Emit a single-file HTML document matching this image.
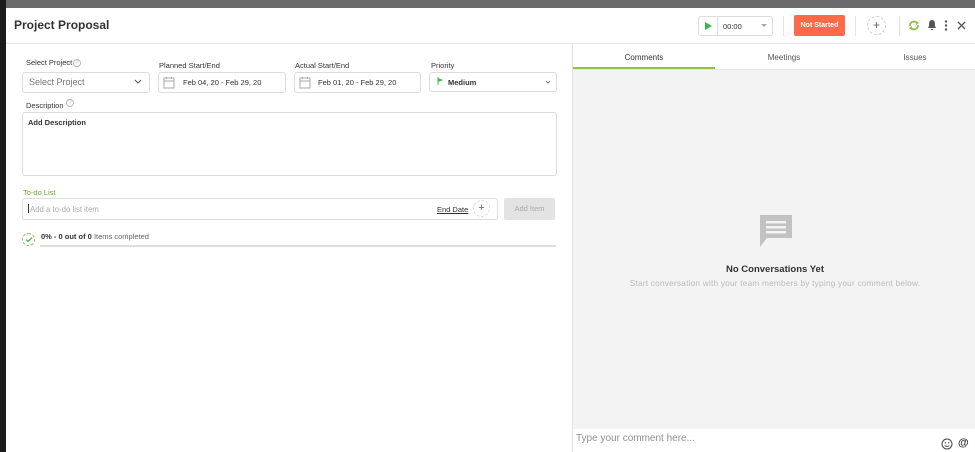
<!DOCTYPE html>
<html><head><style>
*{box-sizing:border-box;margin:0;padding:0}
body{width:975px;height:452px;overflow:hidden;background:#555;font-family:"Liberation Sans",sans-serif;position:relative;color:#333}
.abs{position:absolute}
.top{left:0;top:0;width:975px;height:8px;background:#6b6b6b}
.lft{left:0;top:0;width:6px;height:452px;background:#1c1c1c}
.modal{left:6px;top:8px;width:969px;height:444px;background:#fff}
.hdr{left:6px;top:8px;width:969px;height:36px;border-bottom:1px solid #e8e8e8;background:#fff}
.lbl{font-size:7.5px;color:#333}
.box{border:1px solid #ddd;border-radius:3px;background:#fff;font-size:8px}
</style></head><body>
<div class="abs top"></div><div class="abs lft"></div>
<div class="abs modal"></div>
<div class="abs hdr"></div>
<div class="abs" style="left:14px;top:18px;font-size:12px;color:#333;font-weight:bold">Project Proposal</div>
<div class="abs box" style="left:698px;top:16px;width:75px;height:20px"></div>
<div class="abs" style="left:717px;top:16px;width:1px;height:20px;background:#ddd"></div>
<svg class="abs" style="left:704px;top:21px" width="9" height="10"><path d="M1 1L8 5L1 9Z" fill="#3cb54a"/></svg>
<div class="abs" style="left:723px;top:22px;font-size:7.5px">00:00</div>
<svg class="abs" style="left:761px;top:24px" width="6" height="4"><path d="M0 0L6 0L3 3Z" fill="#aaa"/></svg>
<div class="abs" style="left:783px;top:16px;width:1px;height:20px;background:#e5e5e5"></div>
<div class="abs" style="left:794px;top:15px;width:51px;height:21px;background:#fe6a48;border-radius:2px;color:#fff;font-size:7px;font-weight:bold;text-align:center;line-height:21px">Not Started</div>
<div class="abs" style="left:855px;top:16px;width:1px;height:20px;background:#e5e5e5"></div>
<div class="abs" style="left:867px;top:16px;width:19px;height:19px;border:1px dashed #ccc;border-radius:50%;text-align:center;line-height:17px;font-size:12px;color:#666">+</div>
<div class="abs" style="left:899px;top:16px;width:1px;height:20px;background:#e5e5e5"></div>
<svg class="abs" style="left:908px;top:20px" width="12" height="11"><path d="M2 6A4 4 0 0 1 9 3M10 5A4 4 0 0 1 3 8" stroke="#8bc34a" stroke-width="1.8" fill="none"/><path d="M8 1L11 3L8 5Z M4 6L1 8L4 10Z" fill="#8bc34a"/></svg>
<svg class="abs" style="left:927px;top:19px" width="10" height="12"><path d="M5 1C2 1 2 4 2 7L1 9H9L8 7C8 4 8 1 5 1Z M4 10H6V11H4Z" fill="#555"/></svg>
<svg class="abs" style="left:944px;top:20px" width="4" height="11"><circle cx="2" cy="1.5" r="1.2" fill="#555"/><circle cx="2" cy="5.5" r="1.2" fill="#555"/><circle cx="2" cy="9.5" r="1.2" fill="#555"/></svg>
<svg class="abs" style="left:957px;top:21px" width="9" height="9"><path d="M1 1L8 8M8 1L1 8" stroke="#555" stroke-width="1.3"/></svg>
<div class="abs" style="left:572px;top:44px;width:1px;height:408px;background:#e3e3e3"></div>
<div class="abs" style="left:573px;top:44px;width:402px;height:385px;background:#f3f3f3"></div>
<div class="abs" style="left:573px;top:44px;width:402px;height:26px;background:#fff;border-bottom:1px solid #e5e5e5"></div>
<div class="abs" style="left:573px;top:67px;width:142px;height:2px;background:#8bc34a"></div>
<div class="abs" style="left:573px;top:53px;width:142px;text-align:center;font-size:8px;color:#333">Comments</div>
<div class="abs" style="left:715px;top:53px;width:138px;text-align:center;font-size:8px;color:#555">Meetings</div>
<div class="abs" style="left:855px;top:53px;width:120px;text-align:center;font-size:8px;color:#555">Issues</div>
<svg class="abs" style="left:759px;top:214px" width="34" height="34"><path d="M1 1H33V24H8L1 33Z" fill="#c2c2c2"/><rect x="7" y="7" width="20" height="2.5" fill="#f3f3f3"/><rect x="7" y="12" width="20" height="2.5" fill="#f3f3f3"/><rect x="7" y="17" width="20" height="2.5" fill="#f3f3f3"/></svg>
<div class="abs" style="left:573px;top:264px;width:404px;text-align:center;font-size:9.5px;font-weight:bold;color:#333">No Conversations Yet</div>
<div class="abs" style="left:573px;top:278px;width:404px;text-align:center;font-size:8.3px;color:#bbb;letter-spacing:.2px">Start conversation with your team members by typing your comment below.</div>
<div class="abs" style="left:576px;top:433px;font-size:10px;color:#8a8f99">Type your comment here...</div>
<svg class="abs" style="left:941px;top:438px" width="12" height="12"><circle cx="6" cy="6" r="5" stroke="#444" fill="none"/><circle cx="4.3" cy="4.8" r=".7" fill="#444"/><circle cx="7.7" cy="4.8" r=".7" fill="#444"/><path d="M3.8 7.5Q6 9.3 8.2 7.5" stroke="#444" fill="none"/></svg>
<div class="abs" style="left:958px;top:437px;font-size:11px;color:#333;font-weight:bold">@</div>
<div class="abs lbl" style="left:26px;top:58px">Select Project</div>
<div class="abs" style="left:73px;top:59px;width:8px;height:8px;border:1px solid #bbb;border-radius:50%;font-size:6px;color:#bbb;text-align:center;line-height:6px">?</div>
<div class="abs lbl" style="left:159px;top:61px">Planned Start/End</div>
<div class="abs lbl" style="left:295px;top:61px">Actual Start/End</div>
<div class="abs lbl" style="left:431px;top:61px">Priority</div>
<div class="abs box" style="left:22px;top:72px;width:128px;height:21px"></div>
<div class="abs" style="left:29px;top:77px;font-size:9px;color:#777">Select Project</div>
<svg class="abs" style="left:134px;top:79px" width="8" height="5"><path d="M1 1L4 4L7 1" stroke="#555" fill="none"/></svg>
<div class="abs box" style="left:158px;top:72px;width:128px;height:21px"></div>
<div class="abs box" style="left:294px;top:72px;width:127px;height:21px"></div>
<svg class="abs" style="left:163px;top:76px" width="12" height="13"><rect x="1" y="2" width="10" height="10" stroke="#aaa" fill="none"/><path d="M1 5H11M3.5 1V3M8.5 1V3" stroke="#aaa"/></svg>
<svg class="abs" style="left:299px;top:76px" width="12" height="13"><rect x="1" y="2" width="10" height="10" stroke="#aaa" fill="none"/><path d="M1 5H11M3.5 1V3M8.5 1V3" stroke="#aaa"/></svg>
<div class="abs" style="left:183px;top:78px;font-size:7.5px">Feb 04, 20 - Feb 29, 20</div>
<div class="abs" style="left:318px;top:78px;font-size:7.5px">Feb 01, 20 - Feb 29, 20</div>
<div class="abs box" style="left:429px;top:72px;width:128px;height:20px"></div>
<svg class="abs" style="left:437px;top:77px" width="7" height="8"><path d="M1 0V8" stroke="#3cb54a"/><path d="M1 1L6 3L1 5Z" fill="#3cb54a"/></svg>
<div class="abs" style="left:448px;top:78px;font-size:7.5px;font-weight:bold">Medium</div>
<svg class="abs" style="left:545px;top:80px" width="6" height="4"><path d="M1 1L3 3L5 1" stroke="#777" fill="none"/></svg>
<div class="abs lbl" style="left:26px;top:101px">Description</div>
<div class="abs" style="left:66px;top:99px;width:8px;height:8px;border:1px solid #bbb;border-radius:50%;font-size:6px;color:#bbb;text-align:center;line-height:6px">?</div>
<div class="abs box" style="left:22px;top:112px;width:535px;height:64px"></div>
<div class="abs" style="left:28px;top:118px;font-size:7.5px;font-weight:bold">Add Description</div>
<div class="abs" style="left:23px;top:188px;font-size:7.5px;color:#6bab2a">To-do List</div>
<div class="abs box" style="left:22px;top:198px;width:476px;height:22px"></div>
<div class="abs" style="left:28px;top:204px;width:1px;height:9px;background:#333"></div>
<div class="abs" style="left:30px;top:205px;font-size:7.8px;color:#aaa">Add a to-do list item</div>
<div class="abs" style="left:437px;top:205px;font-size:7.5px;color:#333;text-decoration:underline">End Date</div>
<div class="abs" style="left:473px;top:200px;width:17px;height:17px;border:1px dashed #ddd;border-radius:50%;text-align:center;line-height:15px;font-size:11px;color:#666">+</div>
<div class="abs" style="left:504px;top:198px;width:51px;height:22px;background:#e3e3e3;border-radius:2px;font-size:7.5px;color:#aaa;text-align:center;line-height:22px">Add Item</div>
<div class="abs" style="left:22px;top:233px;width:13px;height:13px;border:1px dashed #8bc34a;border-radius:50%"></div>
<svg class="abs" style="left:25px;top:236px" width="8" height="7"><path d="M1 3.5L3 5.5L7 1.5" stroke="#3cb54a" stroke-width="1.2" fill="none"/></svg>
<div class="abs" style="left:41px;top:232px;font-size:7.5px"><b>0% - 0 out of 0</b> <span style="color:#666">Items completed</span></div>
<div class="abs" style="left:40px;top:245px;width:516px;height:2px;background:#ddd"></div>
</body></html>
